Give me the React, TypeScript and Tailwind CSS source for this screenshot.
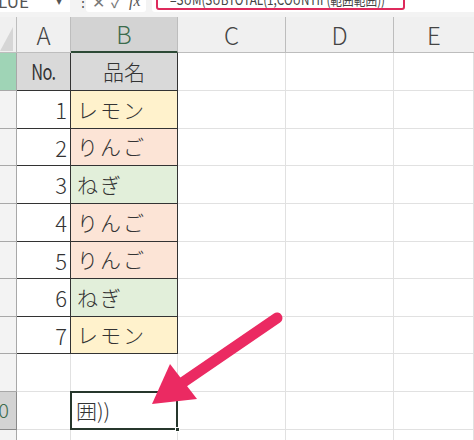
const F = "font-['Noto_Sans_CJK_JP','Noto_Sans',sans-serif]";

type Row = { n: number; name: string; bg: string };

const rows: Row[] = [
  { n: 1, name: "レモン", bg: "bg-[#fff2cc]" },
  { n: 2, name: "りんご", bg: "bg-[#fce4d6]" },
  { n: 3, name: "ねぎ", bg: "bg-[#e2efda]" },
  { n: 4, name: "りんご", bg: "bg-[#fce4d6]" },
  { n: 5, name: "りんご", bg: "bg-[#fce4d6]" },
  { n: 6, name: "ねぎ", bg: "bg-[#e2efda]" },
  { n: 7, name: "レモン", bg: "bg-[#fff2cc]" },
];

const Grid = "border-r border-b border-[#e1e1e1] bg-white";
const RowHead = "border-r border-b border-[#a8a8a8] bg-[#f3f3f3]";

const EmptyRest = () => (
  <>
    <div className={Grid} />
    <div className={Grid} />
    <div className={Grid} />
  </>
);

const FormulaBar = () => (
  <div className={`h-[17px] bg-[#f3f3f3] flex items-start text-[#555] ${F}`}>
    <div className="h-[12px] w-[70px] bg-white overflow-hidden relative">
      <span className="absolute left-[-2px] top-[-9px] text-[17px] leading-[20px]">LUE</span>
      <span className="absolute left-[56px] top-[-8px] text-[12px] leading-[16px]">▾</span>
    </div>
    <div className="h-[12px] w-[16px] overflow-hidden relative">
      <span className="absolute left-[6px] top-[-8px] text-[14px] leading-[18px]">⋮</span>
    </div>
    <div className="h-[12px] w-[60px] bg-white rounded-b-[3px] overflow-hidden relative">
      <span className="absolute left-[6px] top-[-8px] text-[16px] leading-[18px] text-[#777]">✕</span>
      <span className="absolute left-[25px] top-[-8px] text-[16px] leading-[18px] text-[#777]">✓</span>
      <span className="absolute left-[43px] top-[-9px] text-[16px] leading-[20px] italic font-['Liberation_Serif',serif]">fx</span>
    </div>
    <div className="ml-[6px] h-[12px] flex-1 bg-white rounded-bl-[3px] overflow-hidden relative">
      <div className="absolute left-[4px] top-[-6px] w-[249px] h-[16px] border-2 border-[#de2a5c] rounded-b-[3px]" />
      <span className="absolute left-[18px] top-[-10px] text-[15px] leading-[18px] text-[#444] whitespace-nowrap origin-left scale-x-[0.78]">
        =SUM(SUBTOTAL(1,COUNTIF(範囲範囲))
      </span>
    </div>
  </div>
);

export default function App() {
  return (
    <div className={`relative w-[474px] h-[440px] overflow-hidden bg-white ${F}`}>
      <FormulaBar />
      <div className="grid grid-cols-[17px_54px_107px_108px_108px_80px] grid-rows-[36px_38px_38px_37px_38px_38px_37px_38px_37px_38px_38px_30px]">
        {/* column headers */}
        <div className="border-r border-b border-[#bdbdbd] bg-[#f0f0f0] relative overflow-hidden">
          <svg width="16" height="35" className="absolute left-0 top-0">
            <polygon points="0,34 13,34 13,10" fill="#d6d6d6" />
          </svg>
        </div>
        <div className="border-r border-b border-[#bdbdbd] bg-[#f0f0f0] flex items-center justify-center text-[24px] font-light text-[#444]">A</div>
        <div className="border-r border-[#bdbdbd] border-b-2 border-b-[#2d4a36] bg-[#d3d3d3] flex items-center justify-center text-[24px] font-light text-[#3b6b4c]">B</div>
        <div className="border-r border-b border-[#bdbdbd] bg-[#f0f0f0] flex items-center justify-center text-[24px] font-light text-[#444]">C</div>
        <div className="border-r border-b border-[#bdbdbd] bg-[#f0f0f0] flex items-center justify-center text-[24px] font-light text-[#444]">D</div>
        <div className="border-b border-[#bdbdbd] bg-[#f0f0f0] flex items-center justify-center text-[24px] font-light text-[#444]">E</div>

        {/* table header row */}
        <div className="border-r border-b border-[#a8a8a8] bg-[#9fd4b6]" />
        <div className="border-r border-b border-[#333] bg-[#d9d9d9] flex items-center justify-center text-[21px] text-[#333]">
          <span className="inline-block scale-x-[0.78] tracking-[-1px]">No.</span>
        </div>
        <div className="border-r border-b border-[#333] bg-[#d9d9d9] flex items-center justify-center text-[21px] font-light text-[#333]">品名</div>
        <EmptyRest />

        {rows.map((r) => (
          <div key={r.n} className="contents">
            <div className={RowHead} />
            <div className="border-r border-b border-[#333] bg-white flex items-center justify-end pr-[3px] text-[22px] font-light text-[#333]">
              {r.n}
            </div>
            <div className={`border-r border-b border-[#333] ${r.bg} flex items-center pl-[6px] text-[21px] font-light text-[#333] tracking-[2px]`}>
              {r.name}
            </div>
            <EmptyRest />
          </div>
        ))}

        {/* empty row */}
        <div className={RowHead} />
        <div className={Grid} />
        <div className={Grid} />
        <EmptyRest />

        {/* active row */}
        <div className="border-r border-b border-[#8a8a8a] bg-[#d3d3d3] relative overflow-hidden">
          <span className="absolute right-[7px] top-[6px] text-[20px] font-light text-[#3b6b4c] leading-[24px]">10</span>
        </div>
        <div className={Grid} />
        <div className={`${Grid} relative`}>
          <div className="absolute -left-px -top-px -right-px -bottom-px border-2 border-[#26372c]" />
          <div className="absolute -right-[3px] -bottom-[3px] w-[5px] h-[5px] bg-[#26372c] border border-white" />
          <div className="h-full flex items-center pl-[5px] text-[21px] font-light text-[#333]">囲))</div>
        </div>
        <EmptyRest />

        {/* last row */}
        <div className={RowHead} />
        <div className={Grid} />
        <div className={Grid} />
        <EmptyRest />
      </div>

      {/* arrow */}
      <svg width="474" height="440" className="absolute left-0 top-0 pointer-events-none">
        <line x1="277" y1="318" x2="182" y2="383" stroke="#eb2a62" strokeWidth="11" strokeLinecap="round" />
        <polygon points="152,404 170,364 197,399" fill="#eb2a62" />
      </svg>
    </div>
  );
}
